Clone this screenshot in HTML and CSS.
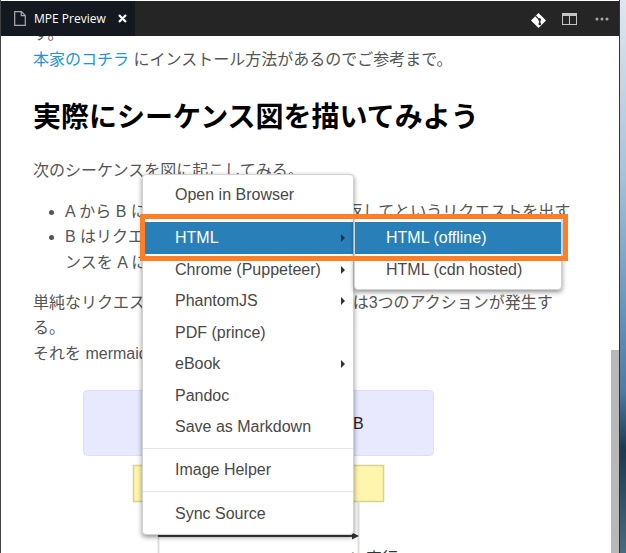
FILE: index.html
```html
<!DOCTYPE html>
<html lang="ja">
<head>
<meta charset="utf-8">
<title>MPE Preview</title>
<link rel="stylesheet" href="styles.css">
</head>
<body>
<div class="window">
  <header class="tabbar">
    <div class="tab">
      <svg class="file-icon" width="12" height="15" viewBox="0 0 12 15"><path d="M1 .7h6.5L11.3 4.5V14.3H.7V.7z M7.3 .7V4.7H11.3" fill="none" stroke="#a9a9a9" stroke-width="1.2"/></svg>
      <span class="tab-title">MPE Preview</span>
      <svg class="close-icon" width="9" height="9" viewBox="0 0 9 9"><path d="M1 1L8 8M8 1L1 8" stroke="#fff" stroke-width="2.2"/></svg>
    </div>
    <div class="actions">
      <svg class="git-icon" width="15" height="15" viewBox="0 0 15 15"><path d="M7.500 0L15 7.500 7.500 15 0 7.500z" fill="#fff"/><path d="M4.600 2.900L7.600 5.900 8.800 7.100V11" fill="none" stroke="#252526" stroke-width="1.300"/><circle cx="8.800" cy="11" r="1.300" fill="#252526"/><circle cx="8.600" cy="6.600" r="1.300" fill="#252526"/></svg>
      <svg width="15" height="12" viewBox="0 0 15 12"><path d="M0 0H15V12H0z M1 3V11H7V3z M8 3V11H14V3z" fill="#c5c5c5" fill-rule="evenodd"/></svg>
      <svg width="14" height="4" viewBox="0 0 14 4"><circle cx="2" cy="2" r="1.500" fill="#a8a8a8"/><circle cx="7" cy="2" r="1.500" fill="#a8a8a8"/><circle cx="12" cy="2" r="1.500" fill="#a8a8a8"/></svg>
    </div>
  </header>
  <div class="body">
    <main class="preview">
      <article class="doc">
        <p class="tight">す。</p>
        <p><a href="#">本家のコチラ</a> にインストール方法があるのでご参考まで。</p>
        <h1>実際にシーケンス図を描いてみよう</h1>
        <p class="lead">次のシーケンスを図に起こしてみる。</p>
        <ul>
          <li>A から B に対して何か を処理してから 返してというリクエストを出す</li>
          <li>B はリクエストを受け取ったら適切な処理をして結果のレスポ<br>ンスを A に返す</li>
        </ul>
        <p>単純なリクエストとレスポンスだけど図的には3つのアクションが発生する。<br>それを mermaid で書いてみるとこうなる</p>
        <svg class="diagram" width="350" height="180" viewBox="0 0 350 180">
          <rect x=".5" y=".5" width="350" height="65" rx="4" fill="#e8e8ff" stroke="#dcdcf8"/>
          <text x="270" y="39" class="actor">B</text>
          <rect x="50.500" y="75.500" width="250" height="36" fill="#fff5ad" stroke="#d8d488" stroke-width="1.500"/>
          <path d="M75.500 111V180M275.500 111V180" stroke="#dedede" stroke-width="2"/>
          <path d="M75 146H270" stroke="#444" stroke-width="2"/>
          <path d="M269 142.500L276 146 269 149.500z" fill="#333"/>
          <text x="267" y="174" class="label">い実行</text>
        </svg>
      </article>
    </main>
    <div class="scrollbar"><div class="thumb"></div></div>
    <nav class="menu">
      <div class="item">Open in Browser</div>
      <div class="sep"></div>
      <div class="item active has-sub">HTML
        <div class="menu submenu">
          <div class="item active">HTML (offline)</div>
          <div class="item">HTML (cdn hosted)</div>
        </div>
      </div>
      <div class="item has-sub">Chrome (Puppeteer)</div>
      <div class="item has-sub">PhantomJS</div>
      <div class="item">PDF (prince)</div>
      <div class="item has-sub">eBook</div>
      <div class="item">Pandoc</div>
      <div class="item">Save as Markdown</div>
      <div class="sep"></div>
      <div class="item">Image Helper</div>
      <div class="sep sep-last"></div>
      <div class="item">Sync Source</div>
    </nav>
    <div class="callout"></div>
  </div>
</div>
<div class="desktop"></div>
</body>
</html>
```
FILE: styles.css
```css
* { box-sizing: border-box; }
html, body { margin: 0; height: 553px; overflow: hidden; }
body {
  display: flex;
  font-family: "Liberation Sans", "Noto Sans CJK JP", sans-serif;
  background: #fff;
}
.window {
  width: 620px;
  height: 553px;
  display: flex;
  flex-direction: column;
  border-left: 1px solid #444;
  border-right: 1px solid #24384c;
  padding-top: 1px;
}
.desktop {
  flex: 1;
  background: linear-gradient(#dfe7ef 0, #a9c3d9 170px, #5c8ab5 340px, #4f7ca6 390px, #1d3850 450px, #4b6b80 553px);
}
.tabbar {
  height: 35px;
  flex: none;
  display: flex;
  justify-content: space-between;
  background: #252526;
  position: relative;
  z-index: 1;
}
.tab {
  width: 134px;
  display: flex;
  align-items: center;
  background: #141920;
  padding-left: 13px;
}
.tab-title {
  margin-left: 8px;
  font: 12px "Open Sans", sans-serif;
  color: #fff;
  width: 84px;
}
.actions {
  display: flex;
  align-items: center;
  gap: 18px;
  padding-right: 10px;
}
.git-icon { margin: 3px -2px 0 0; }
.body {
  flex: 1;
  display: flex;
  position: relative;
  min-height: 0;
}
.preview {
  flex: 1;
  overflow: hidden;
  padding: 0 32px;
}
.doc {
  margin-top: -15px;
  color: #555;
  font-size: 16px;
  line-height: 25.600px;
}
.doc p { margin: 0 0 16px; }
.doc p.tight { margin: 0; }
.doc p.lead { margin-bottom: 15px; }
.doc a { color: #1e96d8; text-decoration: none; }
.doc h1 {
  font-size: 28px;
  line-height: 34px;
  color: #000;
  margin: 29px 0 23px;
}
.doc ul { margin: 0 0 14px; padding-left: 32px; }
.diagram { display: block; margin: 24px 0 0 50px; overflow: visible; }
.actor { font-size: 16px; fill: #222; }
.label { font-size: 16px; fill: #333; }
.scrollbar { width: 8px; flex: none; background: #fff; padding-top: 314px; }
.thumb { height: 100%; background: #b8b8b8; }
.menu {
  position: absolute;
  left: 141px;
  top: 138px;
  width: 212px;
  padding: 4px 0 4.500px;
  background: #fff;
  border: 1px solid #d2d2d2;
  border-radius: 4px;
  box-shadow: 0 2px 5px rgba(0, 0, 0, .45);
  color: #484848;
  font-size: 16px;
  z-index: 2;
}
.item {
  position: relative;
  height: 31.500px;
  line-height: 31.500px;
  padding-left: 32px;
}
.active { background: #2980b9; color: #fff; }
.has-sub::after {
  content: "";
  position: absolute;
  right: 8px;
  top: 12px;
  border-left: 4px solid #333;
  border-top: 4px solid transparent;
  border-bottom: 4px solid transparent;
}
.sep { height: 11.500px; position: relative; }
.sep-last { height: 12px; }
.sep::after {
  content: "";
  position: absolute;
  left: 0;
  right: 0;
  top: 5px;
  border-top: 1px solid #e4e4e4;
}
.submenu {
  left: 211px;
  top: -5px;
  width: 208px;
  color: #484848;
  padding-bottom: 4px;
}
.submenu .item { padding-left: 31px; }
.callout {
  position: absolute;
  left: 139px;
  top: 178px;
  width: 428px;
  height: 47px;
  z-index: 3;
  border: 5px solid #ff7f27;
  pointer-events: none;
}
```
